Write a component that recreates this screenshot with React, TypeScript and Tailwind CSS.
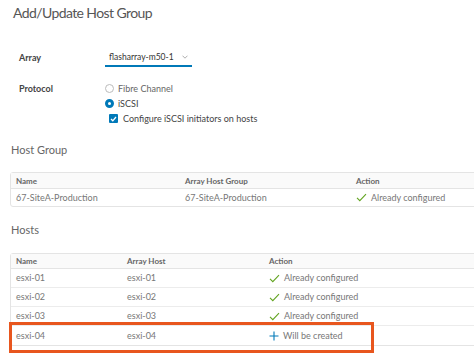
import React from "react";

const font = { fontFamily: "Lato, 'Open Sans', sans-serif" };

const Check = () => (
  <svg width="11" height="9" viewBox="0 0 11 9" className="mr-[4px] shrink-0">
    <path d="M1 4.8 L3.8 7.6 L10 1.2" fill="none" stroke="#62a420" strokeWidth="1.1" />
  </svg>
);

const Plus = () => (
  <svg width="10" height="10" viewBox="0 0 10 10" className="mr-[4px] shrink-0">
    <path d="M5 0.5 V9.5 M0.5 5 H9.5" fill="none" stroke="#0079b8" strokeWidth="1.1" />
  </svg>
);

const hosts = [
  { name: "esxi-01", action: "ok" },
  { name: "esxi-02", action: "ok" },
  { name: "esxi-03", action: "ok" },
  { name: "esxi-04", action: "new" },
];

export default function App() {
  return (
    <div className="w-[474px] h-[361px] bg-white overflow-hidden text-[#565656]" style={font}>
      <h1 className="pl-[13px] pt-[3px] text-[14px] tracking-[-0.6px] leading-[20px] text-[#565656] whitespace-nowrap">
        Add/Update Host Group
      </h1>

      <div className="pl-[19px] pt-[26px] text-[9px]">
        <div className="flex items-center h-[18px]">
          <div className="w-[86px] font-bold text-[#444]">Array</div>
          <div className="flex items-center h-[18px] w-[87px] pl-[4px] border-b-[2px] border-[#0079b8] text-[8.5px] text-[#333] whitespace-nowrap">
            flasharray-m50-1
            <svg width="6" height="4" viewBox="0 0 6 4" className="ml-[8px] shrink-0">
              <path d="M0.5 0.7 L3 3.2 L5.5 0.7" fill="none" stroke="#999" strokeWidth="0.8" />
            </svg>
          </div>
        </div>

        <div className="flex mt-[14px]">
          <div className="w-[86px] font-bold text-[#444] leading-[15px]">Protocol</div>
          <div className="flex flex-col">
            <div className="flex items-center h-[15px]">
              <span className="w-[9px] h-[9px] rounded-full border border-[#bbb] mr-[4px]" />
              <span className="text-[#666]">Fibre Channel</span>
            </div>
            <div className="flex items-center h-[15px]">
              <span className="w-[9px] h-[9px] rounded-full border-[3px] border-[#0079b8] bg-white mr-[4px]" />
              <span className="text-[#444]">iSCSI</span>
            </div>
            <div className="flex items-center h-[15px] pl-[4px]">
              <span className="w-[9px] h-[9px] rounded-[1px] bg-[#0079b8] mr-[5px] flex items-center justify-center">
                <svg width="7" height="6" viewBox="0 0 7 6">
                  <path d="M1 3 L2.8 4.8 L6 1" fill="none" stroke="#fff" strokeWidth="1.3" />
                </svg>
              </span>
              <span className="text-[#444]">Configure iSCSI initiators on hosts</span>
            </div>
          </div>
        </div>
      </div>

      <h2 className="pl-[11px] mt-[16px] text-[11px] leading-[16px] text-[#666]">Host Group</h2>

      <div className="ml-[10px] mt-[14px] w-[470px] border border-[#e4e4e4] rounded-[3px] text-[9px]">
        <div className="flex h-[16px] items-center bg-[#fafafa] border-b border-[#e4e4e4] font-bold text-[8px] text-[#666]">
          <div className="w-[174px] pl-[5px]">Name</div>
          <div className="w-[171px]">Array Host Group</div>
          <div>Action</div>
        </div>
        <div className="flex h-[17px] items-center text-[#777]">
          <div className="w-[174px] pl-[5px]">67-SiteA-Production</div>
          <div className="w-[171px]">67-SiteA-Production</div>
          <div className="flex items-center"><Check />Already configured</div>
        </div>
      </div>

      <h2 className="pl-[11px] mt-[15px] text-[11px] leading-[16px] text-[#666]">Hosts</h2>

      <div className="relative ml-[10px] mt-[15px] w-[470px] border border-[#e4e4e4] rounded-[3px] text-[9px]">
        <div className="flex h-[15px] items-center bg-[#fafafa] border-b border-[#e4e4e4] font-bold text-[8px] text-[#666]">
          <div className="w-[116px] pl-[5px]">Name</div>
          <div className="w-[142px]">Array Host</div>
          <div>Action</div>
        </div>
        {hosts.map((h, i) => (
          <div
            key={h.name}
            className={`flex h-[19px] items-center text-[#777] ${i < hosts.length - 1 ? "border-b border-[#ececec]" : ""}`}
          >
            <div className="w-[116px] pl-[5px]">{h.name}</div>
            <div className="w-[142px]">{h.name}</div>
            <div className="flex items-center">
              {h.action === "ok" ? <Check /> : <Plus />}
              {h.action === "ok" ? "Already configured" : "Will be created"}
            </div>
          </div>
        ))}
        <div className="absolute left-[-2px] top-[68px] w-[365px] h-[31px] border-[3px] border-[#e8561e]" />
      </div>
    </div>
  );
}
